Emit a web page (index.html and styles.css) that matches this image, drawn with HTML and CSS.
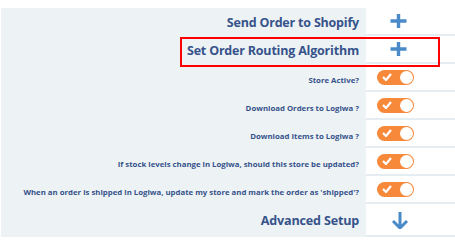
FILE: index.html
```html
<!DOCTYPE html>
<html lang="en">
<head>
    <meta charset="UTF-8">
    <title>Store Settings</title>
    <link rel="stylesheet" href="styles.css">
</head>
<body>
    <div class="panel">
        <div class="row head">
            <div class="label">Send Order to Shopify</div>
            <div class="ctl"><svg class="plus" viewBox="0 0 16 14"><path d="M8 0v14M0 7h16"/></svg></div>
        </div>
        <div class="row head">
            <div class="label">Set Order Routing Algorithm</div>
            <div class="ctl"><svg class="plus" viewBox="0 0 16 14"><path d="M8 0v14M0 7h16"/></svg></div>
        </div>
        <div class="row opt">
            <div class="label">Store Active?</div>
            <div class="ctl"><span class="toggle"><svg class="check" viewBox="0 0 10 8"><path d="M1 4l3 3 5-6"/></svg><span class="knob"></span></span></div>
        </div>
        <div class="row opt">
            <div class="label">Download Orders to Logiwa ?</div>
            <div class="ctl"><span class="toggle"><svg class="check" viewBox="0 0 10 8"><path d="M1 4l3 3 5-6"/></svg><span class="knob"></span></span></div>
        </div>
        <div class="row opt">
            <div class="label">Download Items to Logiwa ?</div>
            <div class="ctl"><span class="toggle"><svg class="check" viewBox="0 0 10 8"><path d="M1 4l3 3 5-6"/></svg><span class="knob"></span></span></div>
        </div>
        <div class="row opt">
            <div class="label">If stock levels change in Logiwa, should this store be updated?</div>
            <div class="ctl"><span class="toggle"><svg class="check" viewBox="0 0 10 8"><path d="M1 4l3 3 5-6"/></svg><span class="knob"></span></span></div>
        </div>
        <div class="row opt">
            <div class="label">When an order is shipped in Logiwa, update my store and mark the order as 'shipped'?</div>
            <div class="ctl"><span class="toggle"><svg class="check" viewBox="0 0 10 8"><path d="M1 4l3 3 5-6"/></svg><span class="knob"></span></span></div>
        </div>
        <div class="row head last">
            <div class="label">Advanced Setup</div>
            <div class="ctl"><svg class="arrow" viewBox="0 0 20 17"><path d="M10 0v15M3 9l7 7 7-7"/></svg></div>
        </div>
        <div class="highlight"></div>
    </div>
</body>
</html>
```

FILE: styles.css
```css
* {margin: 0; padding: 0; box-sizing: border-box;}
html, body {background: #fff; font-family: 'Open Sans', sans-serif; color: #36538b;}
.panel {position: relative; margin: 8px 0 0 1px;}
.row {display: grid; grid-template-columns: 365px 1fr; height: 28px;}
.row.last {height: 33px;}
.label {background: #edf2f5; display: flex; align-items: center; justify-content: flex-end; padding-right: 7px; font-weight: 700; white-space: nowrap;}
.head .label {font-size: 12.5px; letter-spacing: -0.2px;}
.opt .label {font-size: 7.8px; padding-top: 4px;}
.last .label {font-size: 12.6px;}
.ctl {display: flex; align-items: center; padding-left: 24px; border-bottom: 2px solid #e5ecf2;}
.plus {width: 17px; height: 14px; fill: none; stroke: #4a8ac8; stroke-width: 3.4;}
.arrow {width: 20px; height: 17px; fill: none; stroke: #4a8ac8; stroke-width: 3; margin-top: 2px;}
.opt .ctl {padding-left: 11px;}
.toggle {display: flex; align-items: center; justify-content: space-between; width: 37px; height: 15px; border-radius: 8px; background: #f7893b; padding: 0 1px 0 5px;}
.check {width: 10px; height: 8px; fill: none; stroke: #fff; stroke-width: 2.2;}
.knob {width: 13px; height: 13px; border-radius: 50%; background: #fff;}
.highlight {position: absolute; left: 179px; top: 29px; width: 260px; height: 30px; border: 2px solid #f00;}
```
